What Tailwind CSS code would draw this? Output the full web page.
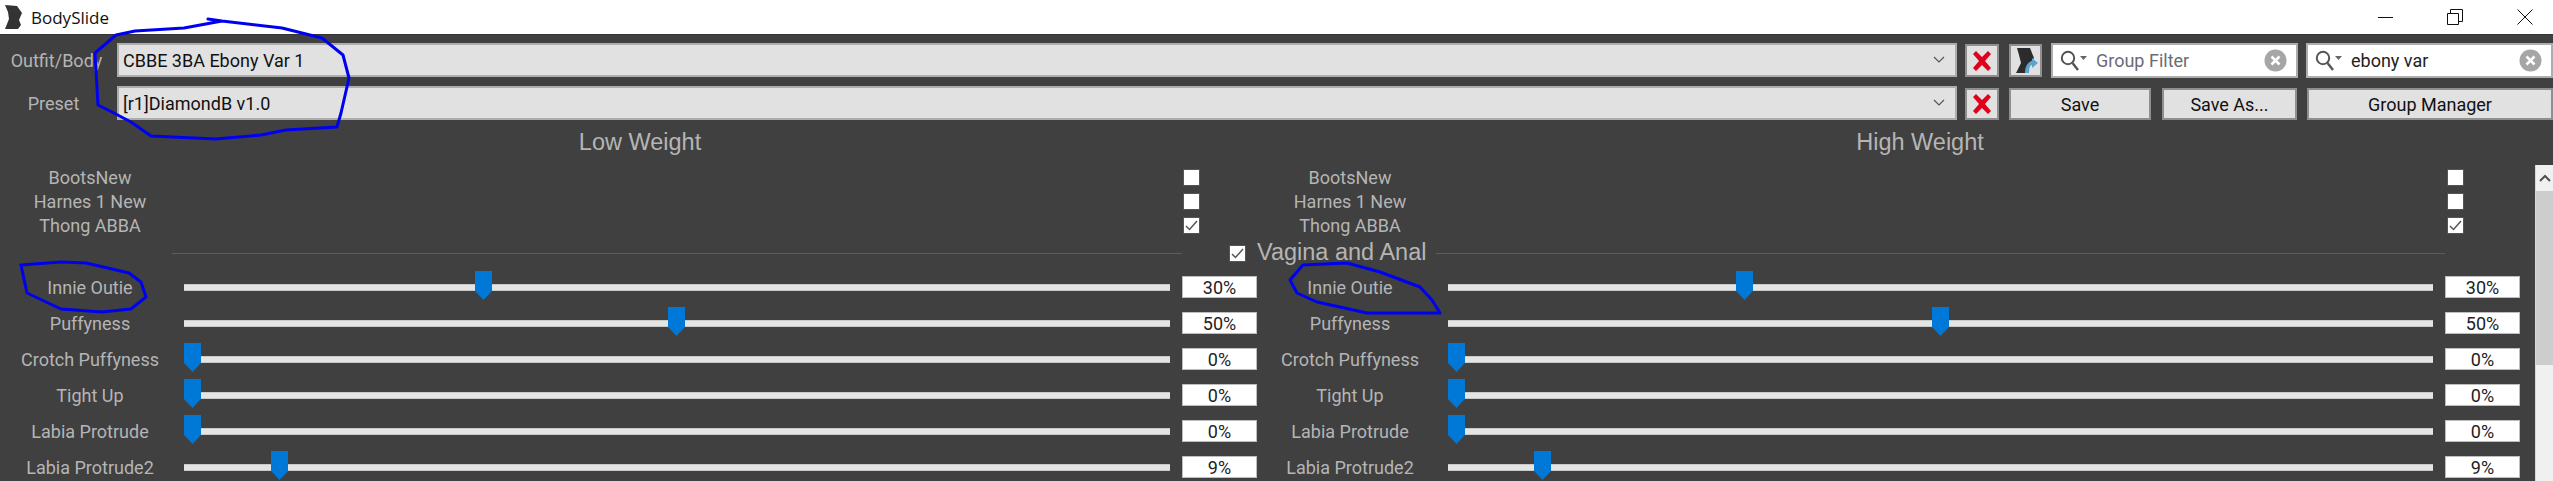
<!DOCTYPE html>
<html>
<head>
<meta charset="utf-8">
<script src="https://cdn.jsdelivr.net/npm/@tailwindcss/browser@4"></script>
</head>
<body class="relative w-[2553px] h-[481px] overflow-hidden bg-[#404040] font-['Roboto','Open_Sans',sans-serif] text-[18px]">

<!-- Title bar -->
<header class="h-[35px] bg-white flex items-center relative border-b border-[#333]">
  <svg class="ml-[4px] w-[19px] h-[25px]" viewBox="0 0 19 25"><path d="M1 0 L13 1 L18 8 L15 15 L17 20 L14 24 L1 24 L5 14 L4 7 Z" fill="#333"/></svg>
  <span class="ml-[8px] text-[17px] leading-none text-[#111] font-['Open_Sans',sans-serif]">BodySlide</span>
  <div class="ml-auto flex items-center h-full">
    <svg class="w-[16px] h-[16px] mr-[53px]" viewBox="0 0 16 16"><path d="M0 8.5H15" stroke="#111" fill="none"/></svg>
    <svg class="w-[16px] h-[16px] mr-[54px]" viewBox="0 0 16 16"><path d="M.5 4.5H11.5V15.5H.5ZM3.5 4.5V.5H15.5V12.5H11.5" stroke="#111" fill="none"/></svg>
    <svg class="w-[16px] h-[16px] mr-[20px]" viewBox="0 0 16 16"><path d="M.5.5 15.5 15.5M15.5.5 .5 15.5" stroke="#111" fill="none"/></svg>
  </div>
</header>

<!-- Toolbar -->
<section class="pt-[8px] flex flex-col gap-[9px]">
  <div class="flex items-start h-[34px]">
    <div class="w-[117px] h-[34px] flex items-center justify-center text-[#b5b5b5] pr-[4px]">Outfit/Body</div>
    <div class="w-[1840px] h-[34px] bg-[#e1e1e1] border-2 border-[#adadad] flex items-center pl-[4px] pr-[10px] text-[#111]">
      <span>CBBE 3BA Ebony Var 1</span>
      <svg class="ml-auto w-[12px] h-[8px]" viewBox="0 0 12 8"><path d="M1 1 6 6 11 1" stroke="#555" stroke-width="1.2" fill="none"/></svg>
    </div>
    <div class="ml-[8px] mt-[1px] w-[34px] h-[33px] bg-[#e1e1e1] border-2 border-[#8f8f8f] flex items-center justify-center">
      <svg class="w-[20px] h-[20px]" viewBox="0 0 20 20"><path d="M1 3 4 0 10 6 16 0 19 3 13 10 19 17 16 20 10 14 4 20 1 17 7 10Z" fill="#e0001b"/></svg>
    </div>
    <div class="ml-[10px] mt-[1px] w-[33px] h-[33px] bg-[#e1e1e1] border-2 border-[#8f8f8f] flex items-center justify-center">
      <svg class="w-[29px] h-[29px]" viewBox="0 0 29 29"><path d="M6 2H19L23 12 19 17 16 27H5L10 17 8 9Z" fill="#2b2b2b"/><path d="M14 27C14 20 17 16 21 15V12L27 17 21 22V19C19 19 18 22 18 27Z" fill="#5ea3cf"/></svg>
    </div>
    <div class="ml-[9px] w-[247px] h-[35px] bg-white border-2 border-[#adadad] flex items-center pl-[7px] pr-[9px]">
      <svg class="w-[28px] h-[24px] shrink-0" viewBox="0 0 28 24"><circle cx="8" cy="9" r="6.2" stroke="#555" stroke-width="2" fill="none"/><path d="M12.5 14 18 21" stroke="#555" stroke-width="2.4"/><path d="M20 7H27L23.500 11Z" fill="#666"/></svg>
      <span class="ml-[8px] text-[#6b6b76]">Group Filter</span>
      <svg class="ml-auto w-[23px] h-[23px]" viewBox="0 0 23 23"><circle cx="11.500" cy="11.500" r="11" fill="#a6a6a6"/><path d="M7.500 7.500 15.500 15.500M15.500 7.500 7.500 15.500" stroke="#fff" stroke-width="2.500"/></svg>
    </div>
    <div class="ml-[8px] w-[247px] h-[35px] bg-white border-2 border-[#adadad] flex items-center pl-[7px] pr-[9px]">
      <svg class="w-[28px] h-[24px] shrink-0" viewBox="0 0 28 24"><circle cx="8" cy="9" r="6.2" stroke="#555" stroke-width="2" fill="none"/><path d="M12.5 14 18 21" stroke="#555" stroke-width="2.4"/><path d="M20 7H27L23.500 11Z" fill="#666"/></svg>
      <span class="ml-[8px] text-[#222]">ebony var</span>
      <svg class="ml-auto w-[23px] h-[23px]" viewBox="0 0 23 23"><circle cx="11.500" cy="11.500" r="11" fill="#a6a6a6"/><path d="M7.500 7.500 15.500 15.500M15.500 7.500 7.500 15.500" stroke="#fff" stroke-width="2.500"/></svg>
    </div>
  </div>
  <div class="flex items-start h-[34px]">
    <div class="w-[117px] h-[34px] flex items-center justify-center text-[#b5b5b5] pr-[10px]">Preset</div>
    <div class="w-[1840px] h-[34px] bg-[#e1e1e1] border-2 border-[#adadad] flex items-center pl-[4px] pr-[10px] text-[#111]">
      <span>[r1]DiamondB v1.0</span>
      <svg class="ml-auto w-[12px] h-[8px]" viewBox="0 0 12 8"><path d="M1 1 6 6 11 1" stroke="#555" stroke-width="1.2" fill="none"/></svg>
    </div>
    <div class="ml-[8px] mt-[2px] w-[34px] h-[32px] bg-[#e1e1e1] border-2 border-[#8f8f8f] flex items-center justify-center">
      <svg class="w-[20px] h-[20px]" viewBox="0 0 20 20"><path d="M1 3 4 0 10 6 16 0 19 3 13 10 19 17 16 20 10 14 4 20 1 17 7 10Z" fill="#e0001b"/></svg>
    </div>
    <button class="ml-[10px] mt-[2px] w-[142px] h-[32px] bg-[#e1e1e1] border-2 border-[#8f8f8f] text-[#111]">Save</button>
    <button class="ml-[11px] mt-[2px] w-[135px] h-[32px] bg-[#e1e1e1] border-2 border-[#8f8f8f] text-[#111]">Save As...</button>
    <button class="ml-[10px] mt-[2px] w-[246px] h-[32px] bg-[#e1e1e1] border-2 border-[#8f8f8f] text-[#111]">Group Manager</button>
  </div>
</section>

<!-- Weight headings -->
<div class="flex h-[45px] items-center w-[2560px] text-[23.5px] text-[#b5b5b5] font-['Liberation_Sans',sans-serif]">
  <div class="w-[1280px] text-center">Low Weight</div>
  <div class="w-[1280px] text-center">High Weight</div>
</div>

<!-- Slider panel -->
<main class="flex w-[2553px] h-[316px] overflow-hidden">
  <div class="w-[2535px] text-[#b5b5b5]">
    <div class="flex h-[24px] items-center">
      <div class="w-[180px] text-center">BootsNew</div>
      <div class="ml-[1003px] w-[17px] h-[17px] bg-white border border-[#555]"></div>
      <div class="ml-[60px] w-[180px] text-center">BootsNew</div>
      <div class="ml-[1007px] w-[17px] h-[17px] bg-white border border-[#555]"></div>
    </div>
    <div class="flex h-[24px] items-center">
      <div class="w-[180px] text-center">Harnes 1 New</div>
      <div class="ml-[1003px] w-[17px] h-[17px] bg-white border border-[#555]"></div>
      <div class="ml-[60px] w-[180px] text-center">Harnes 1 New</div>
      <div class="ml-[1007px] w-[17px] h-[17px] bg-white border border-[#555]"></div>
    </div>
    <div class="flex h-[24px] items-center">
      <div class="w-[180px] text-center">Thong ABBA</div>
      <div class="ml-[1003px] w-[17px] h-[17px] bg-white border border-[#555] flex items-center justify-center"><svg class="w-[13px] h-[11px]" viewBox="0 0 13 11"><path d="M1 6 4.500 9.500 12 1" stroke="#555" stroke-width="1.500" fill="none"/></svg></div>
      <div class="ml-[60px] w-[180px] text-center">Thong ABBA</div>
      <div class="ml-[1007px] w-[17px] h-[17px] bg-white border border-[#555] flex items-center justify-center"><svg class="w-[13px] h-[11px]" viewBox="0 0 13 11"><path d="M1 6 4.500 9.500 12 1" stroke="#555" stroke-width="1.500" fill="none"/></svg></div>
    </div>

    <div class="flex h-[32px] items-center">
      <div class="ml-[172px] w-[1010px] h-px bg-[#5c5c5c]"></div>
      <div class="ml-[47px] w-[17px] h-[17px] bg-white border border-[#555] flex items-center justify-center"><svg class="w-[13px] h-[11px]" viewBox="0 0 13 11"><path d="M1 6 4.500 9.500 12 1" stroke="#555" stroke-width="1.500" fill="none"/></svg></div>
      <div class="ml-[11px] w-[170px] whitespace-nowrap text-[23.5px] font-['Liberation_Sans',sans-serif]">Vagina and Anal</div>
      <div class="ml-[9px] w-[1009px] h-px bg-[#5c5c5c]"></div>
    </div>

    <!-- rows -->
    <div class="flex h-[36px] items-center">
      <div class="w-[180px] text-center">Innie Outie</div>
      <div class="ml-[4px] relative w-[986px] h-[7px] bg-[#e3e5e3] border-y border-[#c9c9c9]"><svg class="absolute left-[291px] -top-[14px] w-[17px] h-[29px]" viewBox="0 0 17 29"><path d="M0 0H17V20L8.500 29 0 20Z" fill="#0078d7"/></svg></div>
      <div class="ml-[12px] w-[75px] h-[22px] bg-white border border-[#bdbdbd] flex items-center justify-center text-[#222]">30%</div>
      <div class="ml-[3px] w-[180px] text-center">Innie Outie</div>
      <div class="ml-[8px] relative w-[985px] h-[7px] bg-[#e3e5e3] border-y border-[#c9c9c9]"><svg class="absolute left-[288px] -top-[14px] w-[17px] h-[29px]" viewBox="0 0 17 29"><path d="M0 0H17V20L8.500 29 0 20Z" fill="#0078d7"/></svg></div>
      <div class="ml-[12px] w-[75px] h-[22px] bg-white border border-[#bdbdbd] flex items-center justify-center text-[#222]">30%</div>
    </div>
    <div class="flex h-[36px] items-center">
      <div class="w-[180px] text-center">Puffyness</div>
      <div class="ml-[4px] relative w-[986px] h-[7px] bg-[#e3e5e3] border-y border-[#c9c9c9]"><svg class="absolute left-[484px] -top-[14px] w-[17px] h-[29px]" viewBox="0 0 17 29"><path d="M0 0H17V20L8.500 29 0 20Z" fill="#0078d7"/></svg></div>
      <div class="ml-[12px] w-[75px] h-[22px] bg-white border border-[#bdbdbd] flex items-center justify-center text-[#222]">50%</div>
      <div class="ml-[3px] w-[180px] text-center">Puffyness</div>
      <div class="ml-[8px] relative w-[985px] h-[7px] bg-[#e3e5e3] border-y border-[#c9c9c9]"><svg class="absolute left-[484px] -top-[14px] w-[17px] h-[29px]" viewBox="0 0 17 29"><path d="M0 0H17V20L8.500 29 0 20Z" fill="#0078d7"/></svg></div>
      <div class="ml-[12px] w-[75px] h-[22px] bg-white border border-[#bdbdbd] flex items-center justify-center text-[#222]">50%</div>
    </div>
    <div class="flex h-[36px] items-center">
      <div class="w-[180px] text-center">Crotch Puffyness</div>
      <div class="ml-[4px] relative w-[986px] h-[7px] bg-[#e3e5e3] border-y border-[#c9c9c9]"><svg class="absolute left-0 -top-[14px] w-[17px] h-[29px]" viewBox="0 0 17 29"><path d="M0 0H17V20L8.500 29 0 20Z" fill="#0078d7"/></svg></div>
      <div class="ml-[12px] w-[75px] h-[22px] bg-white border border-[#bdbdbd] flex items-center justify-center text-[#222]">0%</div>
      <div class="ml-[3px] w-[180px] text-center">Crotch Puffyness</div>
      <div class="ml-[8px] relative w-[985px] h-[7px] bg-[#e3e5e3] border-y border-[#c9c9c9]"><svg class="absolute left-0 -top-[14px] w-[17px] h-[29px]" viewBox="0 0 17 29"><path d="M0 0H17V20L8.500 29 0 20Z" fill="#0078d7"/></svg></div>
      <div class="ml-[12px] w-[75px] h-[22px] bg-white border border-[#bdbdbd] flex items-center justify-center text-[#222]">0%</div>
    </div>
    <div class="flex h-[36px] items-center">
      <div class="w-[180px] text-center">Tight Up</div>
      <div class="ml-[4px] relative w-[986px] h-[7px] bg-[#e3e5e3] border-y border-[#c9c9c9]"><svg class="absolute left-0 -top-[14px] w-[17px] h-[29px]" viewBox="0 0 17 29"><path d="M0 0H17V20L8.500 29 0 20Z" fill="#0078d7"/></svg></div>
      <div class="ml-[12px] w-[75px] h-[22px] bg-white border border-[#bdbdbd] flex items-center justify-center text-[#222]">0%</div>
      <div class="ml-[3px] w-[180px] text-center">Tight Up</div>
      <div class="ml-[8px] relative w-[985px] h-[7px] bg-[#e3e5e3] border-y border-[#c9c9c9]"><svg class="absolute left-0 -top-[14px] w-[17px] h-[29px]" viewBox="0 0 17 29"><path d="M0 0H17V20L8.500 29 0 20Z" fill="#0078d7"/></svg></div>
      <div class="ml-[12px] w-[75px] h-[22px] bg-white border border-[#bdbdbd] flex items-center justify-center text-[#222]">0%</div>
    </div>
    <div class="flex h-[36px] items-center">
      <div class="w-[180px] text-center">Labia Protrude</div>
      <div class="ml-[4px] relative w-[986px] h-[7px] bg-[#e3e5e3] border-y border-[#c9c9c9]"><svg class="absolute left-0 -top-[14px] w-[17px] h-[29px]" viewBox="0 0 17 29"><path d="M0 0H17V20L8.500 29 0 20Z" fill="#0078d7"/></svg></div>
      <div class="ml-[12px] w-[75px] h-[22px] bg-white border border-[#bdbdbd] flex items-center justify-center text-[#222]">0%</div>
      <div class="ml-[3px] w-[180px] text-center">Labia Protrude</div>
      <div class="ml-[8px] relative w-[985px] h-[7px] bg-[#e3e5e3] border-y border-[#c9c9c9]"><svg class="absolute left-0 -top-[14px] w-[17px] h-[29px]" viewBox="0 0 17 29"><path d="M0 0H17V20L8.500 29 0 20Z" fill="#0078d7"/></svg></div>
      <div class="ml-[12px] w-[75px] h-[22px] bg-white border border-[#bdbdbd] flex items-center justify-center text-[#222]">0%</div>
    </div>
    <div class="flex h-[36px] items-center">
      <div class="w-[180px] text-center">Labia Protrude2</div>
      <div class="ml-[4px] relative w-[986px] h-[7px] bg-[#e3e5e3] border-y border-[#c9c9c9]"><svg class="absolute left-[87px] -top-[14px] w-[17px] h-[29px]" viewBox="0 0 17 29"><path d="M0 0H17V20L8.500 29 0 20Z" fill="#0078d7"/></svg></div>
      <div class="ml-[12px] w-[75px] h-[22px] bg-white border border-[#bdbdbd] flex items-center justify-center text-[#222]">9%</div>
      <div class="ml-[3px] w-[180px] text-center">Labia Protrude2</div>
      <div class="ml-[8px] relative w-[985px] h-[7px] bg-[#e3e5e3] border-y border-[#c9c9c9]"><svg class="absolute left-[86px] -top-[14px] w-[17px] h-[29px]" viewBox="0 0 17 29"><path d="M0 0H17V20L8.500 29 0 20Z" fill="#0078d7"/></svg></div>
      <div class="ml-[12px] w-[75px] h-[22px] bg-white border border-[#bdbdbd] flex items-center justify-center text-[#222]">9%</div>
    </div>
  </div>
  <!-- Scrollbar -->
  <aside class="w-[18px] bg-[#f0f0f0] border-l border-[#d8d8d8] flex flex-col">
    <div class="h-[26px] flex items-center justify-center"><svg class="w-[12px] h-[8px]" viewBox="0 0 12 8"><path d="M1 7 6 2 11 7" stroke="#505050" stroke-width="2" fill="none"/></svg></div>
    <div class="h-[174px] bg-[#cdcdcd]"></div>
  </aside>
</main>

<!-- Hand-drawn annotations -->
<svg class="absolute left-0 top-0 w-[2553px] h-[481px] pointer-events-none" viewBox="0 0 2553 481" fill="none" stroke="#0000f0" stroke-width="3" stroke-linejoin="round" stroke-linecap="round">
  <path d="M208 19 222 21 282 28 322 38 343 55 349 78 341 113 337 127 286 130 261 135 216 139 151 136 131 122 112 112 98 105 95 53 116 35 135 31 184 28 222 21"/>
  <path d="M21 265 61 262 86 263 129 273 141 282 146 297 131 309 102 312 61 309 27 293 21 265"/>
  <path d="M1347 263 1303 265 1290 280 1297 293 1317 302 1367 313 1440 313 1432 300 1420 287 1380 272 1347 263"/>
</svg>
</body>
</html>
